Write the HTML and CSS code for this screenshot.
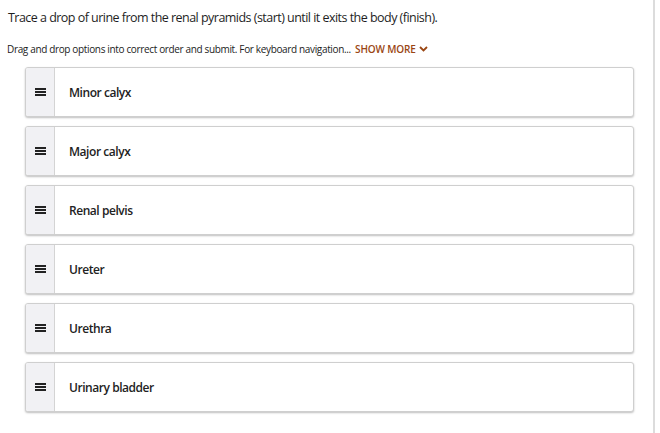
FILE: index.html
```html
<!DOCTYPE html>
<html>
<head>
<meta charset="utf-8">
<link rel="stylesheet" href="styles.css">
</head>
<body>
<div class="page">
  <p class="question">Trace a drop of urine from the renal pyramids (start) until it exits the body (finish).</p>
  <p class="instructions">Drag and drop options into correct order and submit. For keyboard navigation... <span class="more">SHOW MORE <svg class="chev" width="9" height="6" viewBox="0 0 9 6"><path d="M1 1 L4.5 4.5 L8 1" fill="none" stroke="currentColor" stroke-width="1.8"/></svg></span></p>
  <ul class="list">
    <li class="card"><span class="handle"><span class="bars"></span></span><span class="label">Minor calyx</span></li>
    <li class="card"><span class="handle"><span class="bars"></span></span><span class="label">Major calyx</span></li>
    <li class="card"><span class="handle"><span class="bars"></span></span><span class="label">Renal pelvis</span></li>
    <li class="card"><span class="handle"><span class="bars"></span></span><span class="label">Ureter</span></li>
    <li class="card"><span class="handle"><span class="bars"></span></span><span class="label">Urethra</span></li>
    <li class="card"><span class="handle"><span class="bars"></span></span><span class="label">Urinary bladder</span></li>
  </ul>
</div>
</body>
</html>
```
FILE: styles.css
```css
html, body {
  margin: 0;
  padding: 0;
  background: #fff;
}
body {
  font-family: "Open Sans", "Noto Sans", sans-serif;
  color: #222;
}
.page {
  width: 655px;
  height: 433px;
  box-sizing: border-box;
  border-right: 2px solid #dcdcdc;
  padding: 9px 0 0 8px;
}
.question {
  margin: 0;
  font-size: 12.5px;
  letter-spacing: -0.53px;
  line-height: 17px;
  color: #1e1e1e;
}
.instructions {
  margin: 16px 0 0 -1px;
  font-size: 10px;
  letter-spacing: -0.35px;
  line-height: 14px;
  color: #222;
}
.more {
  color: #9a4613;
  font-weight: 600;
  margin-left: 2px;
  letter-spacing: -0.15px;
}
.chev {
  vertical-align: 1px;
  margin-left: 1px;
}
.list {
  list-style: none;
  margin: 11px 0 0 17px;
  padding: 0;
  display: flex;
  flex-direction: column;
  gap: 9px;
  width: 609px;
}
.card {
  display: flex;
  align-items: stretch;
  height: 50px;
  box-sizing: border-box;
  border: 1px solid #cfcfcf;
  border-radius: 3px;
  box-shadow: 0 1px 2px rgba(0,0,0,0.25);
  background: #fff;
  overflow: hidden;
}
.handle {
  width: 28px;
  flex: none;
  background: #f1f1f4;
  border-right: 1px solid #d4d4d4;
  display: flex;
  align-items: center;
  justify-content: center;
}
.bars {
  display: block;
  width: 11px;
  height: 2px;
  background: #222;
  box-shadow: 0 3px 0 #222, 0 6px 0 #222;
  margin-top: -6px;
}
.label {
  display: flex;
  align-items: center;
  padding-left: 14px;
  font-size: 12px;
  font-weight: 600;
  letter-spacing: -0.45px;
  color: #222;
}
```
